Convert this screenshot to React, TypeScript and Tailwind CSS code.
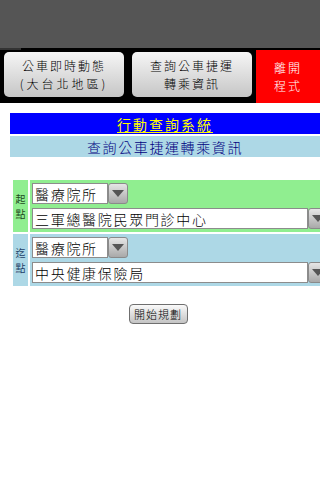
import React from 'react';

const DropButton: React.FC = () => (
    <div className="w-[20px] h-full shrink-0 rounded-[3px] border border-[#8a8a8a] bg-gradient-to-b from-[#e6e6e6] to-[#a9a9a9] flex items-center justify-center">
        <div className="w-0 h-0 border-l-[6px] border-r-[6px] border-t-[7px] border-l-transparent border-r-transparent border-t-[#555]" />
    </div>
);

const Picker: React.FC<{ text: string; width: string }> = ({ text, width }) => (
    <div className="flex h-[21px] shrink-0">
        <div className={`${width} h-full shrink-0 bg-white border border-[#8c8c8c] flex items-center pl-[2px] text-[14px] tracking-[1.7px] leading-none text-black font-light`}>
            {text}
        </div>
        <DropButton />
    </div>
);

const PlaceRow: React.FC<{ label: [string, string]; bg: string; labelColor: string; place: string }> = ({
    label,
    bg,
    labelColor,
    place,
}) => (
    <div className="flex gap-[2px]">
        <div className={`w-[15px] shrink-0 ${bg} flex flex-col items-center justify-center text-[10px] leading-[15px] ${labelColor}`}>
            <span>{label[0]}</span>
            <span>{label[1]}</span>
        </div>
        <div className={`w-[300px] shrink-0 ${bg} pl-[2px] pt-[3px] pb-[3px] flex flex-col gap-[4px]`}>
            <Picker text="醫療院所" width="w-[76px]" />
            <Picker text={place} width="w-[276px]" />
        </div>
    </div>
);

// two-line labels: 12px glyphs, 18px apart so the line boxes never touch
const topBtn =
    'mt-[2px] w-[120px] h-[45px] rounded-[5px] bg-gradient-to-b from-[#f6f6f6] to-[#c6c6c6] text-[12px] leading-[18px] tracking-[2px] font-light text-black flex flex-col items-center justify-center';

const App: React.FC = () => {
    return (
        <div
            className="w-[320px] h-[480px] overflow-hidden bg-white"
            style={{ fontFamily: '"Noto Sans CJK TC", "Noto Sans CJK SC", sans-serif' }}
        >
            <div className="h-12 bg-[#555555]" />

            <div className="h-[55px] bg-black flex flex-col">
                <div className="h-[2px] w-[21px] bg-[#333]" />
                <div className="flex flex-1">
                    <button className={`ml-1 ${topBtn}`}>
                        <span>公車即時動態</span>
                        <span className="tracking-[3px]">(大台北地區)</span>
                    </button>
                    <button className={`ml-2 ${topBtn}`}>
                        <span>查詢公車捷運</span>
                        <span>轉乘資訊</span>
                    </button>
                    <button className="ml-1 flex-1 bg-[#ff0000] text-white text-[12px] leading-[18px] tracking-[2px] font-light flex flex-col items-center justify-center">
                        <span>離開</span>
                        <span>程式</span>
                    </button>
                </div>
            </div>

            <div className="pl-[10px] pt-[10px]">
                <div className="h-[21px] bg-[#0000ff] flex items-center justify-center">
                    <span className="text-[14px] tracking-[2px] leading-none text-[#ffff00] underline underline-offset-2">行動查詢系統</span>
                </div>
                <div className="mt-[2px] h-[21px] bg-[#add8e6] flex items-center justify-center">
                    <span className="text-[14px] tracking-[1.6px] leading-none font-light text-[#000080]">查詢公車捷運轉乘資訊</span>
                </div>
            </div>

            <div className="pl-[13px] pt-[23px] flex flex-col gap-[2px]">
                <PlaceRow label={['起', '點']} bg="bg-[#90ee90]" labelColor="text-[#1d4a1d]" place="三軍總醫院民眾門診中心" />
                <PlaceRow label={['迄', '點']} bg="bg-[#add8e6]" labelColor="text-[#1d4066]" place="中央健康保險局" />
            </div>

            <div className="flex justify-center pt-[18px] pr-[4px]">
                <button className="w-[59px] h-[20px] rounded-[4px] border border-[#6f6f6f] bg-gradient-to-b from-[#fafafa] to-[#c4c4c4] text-[11px] tracking-[1px] leading-none font-light text-black">
                    開始規劃
                </button>
            </div>
        </div>
    );
};

export default App;
